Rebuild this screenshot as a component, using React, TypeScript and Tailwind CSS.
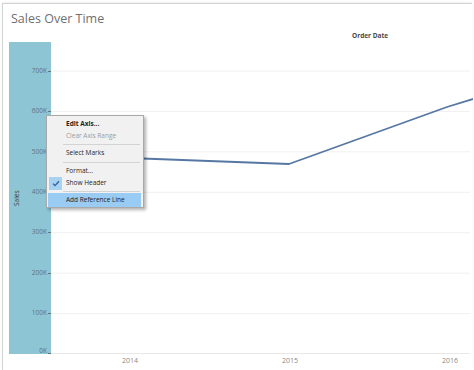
import React from "react";

const ticks = ["700K", "600K", "500K", "400K", "300K", "200K", "100K", "0K"];

function Sep({ h }: { h: string }) {
  return (
    <div className={`${h} flex items-center`}>
      <div className="ml-[16px] mr-[3px] h-px flex-1 bg-[#d3d3d3]" />
    </div>
  );
}

export default function App() {
  const grid = [0, 1, 2, 3, 4, 5, 6].map((k) => 29 + k * 40.43);
  return (
    <div
      className="relative w-[474px] h-[370px] overflow-hidden bg-white"
      style={{ fontFamily: "'Open Sans', 'Noto Sans', sans-serif" }}
    >
      <div className="ml-[2px] mt-[3px] w-[470px] h-[367px] border-l border-t border-[#d2d2d2] shadow-[0_-1px_2px_rgba(0,0,0,0.06)]">
        <div className="h-[26px] pl-[8px] pt-[8px] text-[12.5px] leading-[14px] text-[#6f6f6f]">
          Sales Over Time
        </div>
        <div className="h-[12px] flex">
          <div className="w-[49px] shrink-0" />
          <div className="pl-[300px] text-[6.5px] leading-[12px] font-bold text-[#4a4a4a] whitespace-nowrap">
            Order Date
          </div>
        </div>
        <div className="h-[312px] flex">
          <div className="ml-[6px] w-[42px] h-full shrink-0 bg-[#8ec5d4] flex">
            <div className="w-[16px] flex items-center justify-center">
              <div className="-rotate-90 text-[6.5px] leading-none text-[#3d3d3d] whitespace-nowrap">
                Sales
              </div>
            </div>
            <div className="flex-1 pt-[29px] h-full flex flex-col justify-between">
              {ticks.map((t) => (
                <div key={t} className="h-0 flex items-center justify-end">
                  <span
                    className={`text-[6.5px] leading-none text-[#627379] mr-[1px] ${
                      t === "0K" ? "-translate-y-[3px]" : ""
                    }`}
                  >
                    {t}
                  </span>
                  <span className="w-[3px] h-px bg-[#627379]" />
                </div>
              ))}
            </div>
          </div>
          <svg width="422" height="312" className="shrink-0 block">
            {grid.map((y) => (
              <line key={y} x1="0" x2="419" y1={y} y2={y} stroke="#f0f0f0" strokeWidth="1" />
            ))}
            <line x1="0" x2="419" y1="311.5" y2="311.5" stroke="#e8e8e8" strokeWidth="1" />
            <polyline
              points="78,116 238,122 396,65 556,15.6"
              fill="none"
              stroke="#5677a3"
              strokeWidth="1.8"
              strokeLinejoin="round"
            />
          </svg>
        </div>
        <div className="h-[15px] flex items-center gap-[120px] pl-[107px] text-[7px] text-[#8a8a8a]">
          <div className="w-[40px] text-center">2014</div>
          <div className="w-[40px] text-center">2015</div>
          <div className="w-[40px] text-center">2016</div>
        </div>
      </div>

      <div className="absolute left-[46px] top-[115px] w-[98px] h-[93px] border border-[#a9a9a9] bg-[#f1f1f1] shadow-[2px_2px_3px_rgba(0,0,0,0.3)] pt-[2px] text-[6.5px] text-[#1e1e1e]">
        <div className="h-[12px] flex items-center pl-[19px] font-bold">Edit Axis...</div>
        <div className="h-[12px] flex items-center pl-[19px] text-[#9c9c9c]">Clear Axis Range</div>
        <Sep h="h-[5px]" />
        <div className="h-[12px] flex items-center pl-[19px]">Select Marks</div>
        <Sep h="h-[6px]" />
        <div className="h-[12px] flex items-center pl-[19px]">Format...</div>
        <div className="h-[12px] flex items-center">
          <div className="w-[19px] shrink-0 flex">
            <div className="ml-[2px] w-[13px] h-[13px] bg-[#a8d2f2] flex items-center justify-center">
              <svg width="8" height="7" viewBox="0 0 8 7">
                <path d="M1 3.6 L3 5.6 L7 1.2" fill="none" stroke="#2d5f9a" strokeWidth="1.3" />
              </svg>
            </div>
          </div>
          <span>Show Header</span>
        </div>
        <Sep h="h-[4px]" />
        <div className="h-[14px] ml-[1px] mr-[2px] flex items-center pl-[18px] bg-[#99cbf3]">
          Add Reference Line
        </div>
      </div>
    </div>
  );
}
